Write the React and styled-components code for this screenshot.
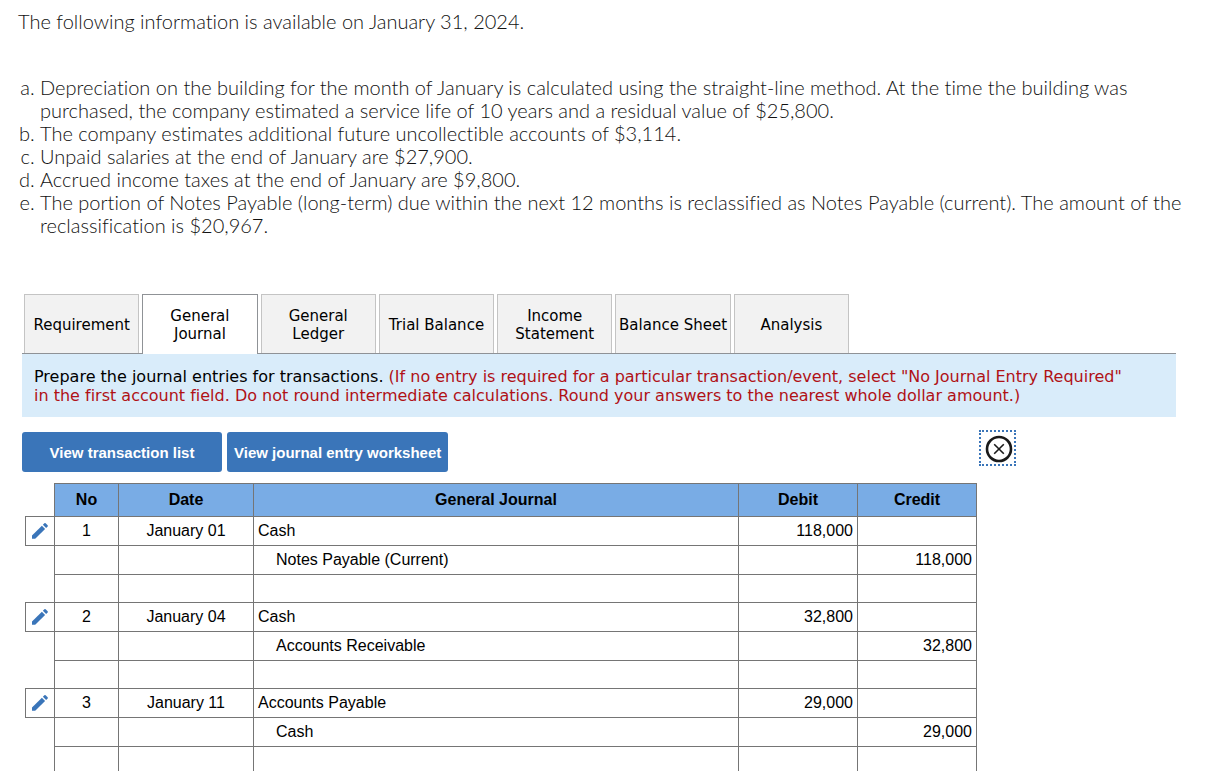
import { useState } from 'react';
import styled, { createGlobalStyle } from 'styled-components';

const GlobalStyle = createGlobalStyle`
	* {
		box-sizing: border-box;
	}

	body {
		margin: 0;
		background-color: white;
		color: black;
		font-family: 'Liberation Sans', Arial, sans-serif;
		font-size: 16px;
		font-variant-ligatures: none;
	}
`;

const Page = styled.main`
	padding: 10px 18px 0;
`;

const Question = styled.section`
	margin-bottom: 57px;
	font-family: Lato, sans-serif;
	font-size: 20px;
	font-weight: 300;
	line-height: 23px;
	color: #111111;
`;

const Intro = styled.p`
	margin: 0 0 43px;
`;

const FactList = styled.ol`
	margin: 0;
	padding-left: 22px;
	list-style-type: lower-alpha;
`;

const Workspace = styled.section`
	margin: 0 28px 0 4px;
`;

const TabList = styled.div`
	display: flex;
	gap: 3px;
	max-width: 827px;
	padding-left: 2px;
`;

const Tab = styled.button`
	flex: 1 1 0;
	min-width: 0;
	height: 59px;
	padding: 2px 0 0;
	border: 1px solid #c4c4c4;
	border-bottom: none;
	background-color: #f2f2f2;
	color: black;
	font-family: 'DejaVu Sans', Verdana, sans-serif;
	font-size: 15px;
	line-height: 18px;
	cursor: pointer;

	&[aria-selected='true'] {
		position: relative;
		height: 60px;
		margin-bottom: -1px;
		padding-bottom: 1px;
		border-color: #8f9296;
		background-color: white;
	}
`;

const Instructions = styled.p`
	margin: 0;
	padding: 13px 40px 12px 12px;
	border-top: 1px solid #8f9296;
	background-color: #d9ecfa;
	font-family: 'DejaVu Sans', Verdana, sans-serif;
	font-size: 16px;
	line-height: 19px;
`;

const Hint = styled.span`
	color: #b01116;
`;

const Journal = styled.div`
	padding: 13px 160px 0 0;
`;

const Toolbar = styled.div`
	display: flex;
	align-items: flex-end;
	gap: 5px;
	min-height: 42px;
	margin-bottom: 11px;
`;

const ViewButton = styled.button`
	min-width: 200px;
	height: 40px;
	padding: 0 7px;
	border: none;
	border-radius: 3px;
	background-color: #3a75b9;
	color: white;
	font-family: inherit;
	font-size: 15px;
	font-weight: bold;
	cursor: pointer;
`;

const CloseButton = styled.button`
	display: flex;
	align-items: center;
	justify-content: center;
	align-self: flex-start;
	width: 37px;
	height: 36px;
	margin-left: auto;
	padding: 2px 0 0 2px;
	border: 2px dotted #3a75b9;
	background-color: white;
	cursor: pointer;
`;

const TableWrapper = styled.div`
	padding: 0 39px 0 3px;
`;

const Table = styled.table`
	width: 100%;
	table-layout: fixed;
	border-collapse: collapse;
	line-height: 18px;
`;

const Col = styled.col`
	width: ${(props) => props.$width};
`;

const HeadCell = styled.th`
	height: 33px;
	padding: 0 4px;
	border: 1px solid #757575;
	background-color: #79ace5;
`;

const Row = styled.tr`
	height: ${(props) => (props.$blank ? '28px' : '29px')};
`;

const Cell = styled.td`
	padding: 0 4px 0 ${(props) => (props.$indent ? '22px' : '4px')};
	border: 1px solid #757575;
	text-align: ${(props) => props.$align || 'left'};
`;

const EditCell = styled.td`
	padding: 0;
	border: ${(props) => (props.$bordered ? '1px solid #757575' : 'none')};
`;

const EditButton = styled.button`
	display: flex;
	align-items: center;
	justify-content: center;
	width: 100%;
	height: 24px;
	padding: 0;
	border: none;
	background: none;
	cursor: pointer;
`;

const facts = [
	'Depreciation on the building for the month of January is calculated using the straight-line method. At the time the building was purchased, the company estimated a service life of 10 years and a residual value of $25,800.',
	'The company estimates additional future uncollectible accounts of $3,114.',
	'Unpaid salaries at the end of January are $27,900.',
	'Accrued income taxes at the end of January are $9,800.',
	'The portion of Notes Payable (long-term) due within the next 12 months is reclassified as Notes Payable (current). The amount of the reclassification is $20,967.',
];

const tabs = [
	'Requirement',
	'General Journal',
	'General Ledger',
	'Trial Balance',
	'Income Statement',
	'Balance Sheet',
	'Analysis',
];

const rows = [
	{ no: 1, date: 'January 01', account: 'Cash', debit: '118,000' },
	{ account: 'Notes Payable (Current)', credit: '118,000' },
	{},
	{ no: 2, date: 'January 04', account: 'Cash', debit: '32,800' },
	{ account: 'Accounts Receivable', credit: '32,800' },
	{},
	{ no: 3, date: 'January 11', account: 'Accounts Payable', debit: '29,000' },
	{ account: 'Cash', credit: '29,000' },
	{},
];

const PencilIcon = () => (
	<svg width='18' height='18' viewBox='0 0 18 18' fill='#3a75b9' aria-hidden='true'>
		<path d='M1 13.6 10.9 3.7 14.1 6.9 4.2 16.8H1z' />
		<path d='M11.9 2.7 13.4 1.2Q14 .7 14.6 1.2L16.6 3.2Q17.1 3.8 16.6 4.4L15.1 5.9z' />
	</svg>
);

const CloseIcon = () => (
	<svg width='28' height='28' viewBox='0 0 28 28' fill='none' stroke='#1a1a1a' aria-hidden='true'>
		<circle cx='14' cy='14' r='12' strokeWidth='2.6' />
		<path d='M9.2 9.2l9.6 9.6M18.8 9.2l-9.6 9.6' strokeWidth='1.6' />
	</svg>
);

export default function App() {
	const [activeTab, setActiveTab] = useState('General Journal');

	return (
		<Page>
			<GlobalStyle />
			<Question>
				<Intro>The following information is available on January 31, 2024.</Intro>
				<FactList>
					{facts.map((fact) => {
						return <li key={fact}>{fact}</li>;
					})}
				</FactList>
			</Question>
			<Workspace>
				<TabList role='tablist'>
					{tabs.map((tab) => {
						return (
							<Tab
								key={tab}
								type='button'
								role='tab'
								aria-selected={tab === activeTab}
								onClick={() => setActiveTab(tab)}
							>
								{tab}
							</Tab>
						);
					})}
				</TabList>
				<Instructions>
					Prepare the journal entries for transactions.{' '}
					<Hint>
						(If no entry is required for a particular transaction/event, select "No Journal Entry Required" in the
						first account field. Do not round intermediate calculations. Round your answers to the nearest whole
						dollar amount.)
					</Hint>
				</Instructions>
				<Journal>
					<Toolbar>
						<ViewButton type='button'>View transaction list</ViewButton>
						<ViewButton type='button'>View journal entry worksheet</ViewButton>
						<CloseButton type='button' aria-label='Close'>
							<CloseIcon />
						</CloseButton>
					</Toolbar>
					<TableWrapper>
						<Table>
							<colgroup>
								<Col $width='29px' />
								<Col $width='64px' />
								<Col $width='135px' />
								<Col $width='auto' />
								<Col $width='119px' />
								<Col $width='119px' />
							</colgroup>
							<thead>
								<tr>
									<EditCell />
									<HeadCell scope='col'>No</HeadCell>
									<HeadCell scope='col'>Date</HeadCell>
									<HeadCell scope='col'>General Journal</HeadCell>
									<HeadCell scope='col'>Debit</HeadCell>
									<HeadCell scope='col'>Credit</HeadCell>
								</tr>
							</thead>
							<tbody>
								{rows.map((row, index) => {
									return (
										<Row key={index} $blank={!row.account}>
											<EditCell $bordered={!!row.no}>
												{row.no && (
													<EditButton type='button' aria-label={`Edit entry ${row.no}`}>
														<PencilIcon />
													</EditButton>
												)}
											</EditCell>
											<Cell $align='center'>{row.no}</Cell>
											<Cell $align='center'>{row.date}</Cell>
											<Cell $indent={!!row.credit}>{row.account}</Cell>
											<Cell $align='right'>{row.debit}</Cell>
											<Cell $align='right'>{row.credit}</Cell>
										</Row>
									);
								})}
							</tbody>
						</Table>
					</TableWrapper>
				</Journal>
			</Workspace>
		</Page>
	);
}
